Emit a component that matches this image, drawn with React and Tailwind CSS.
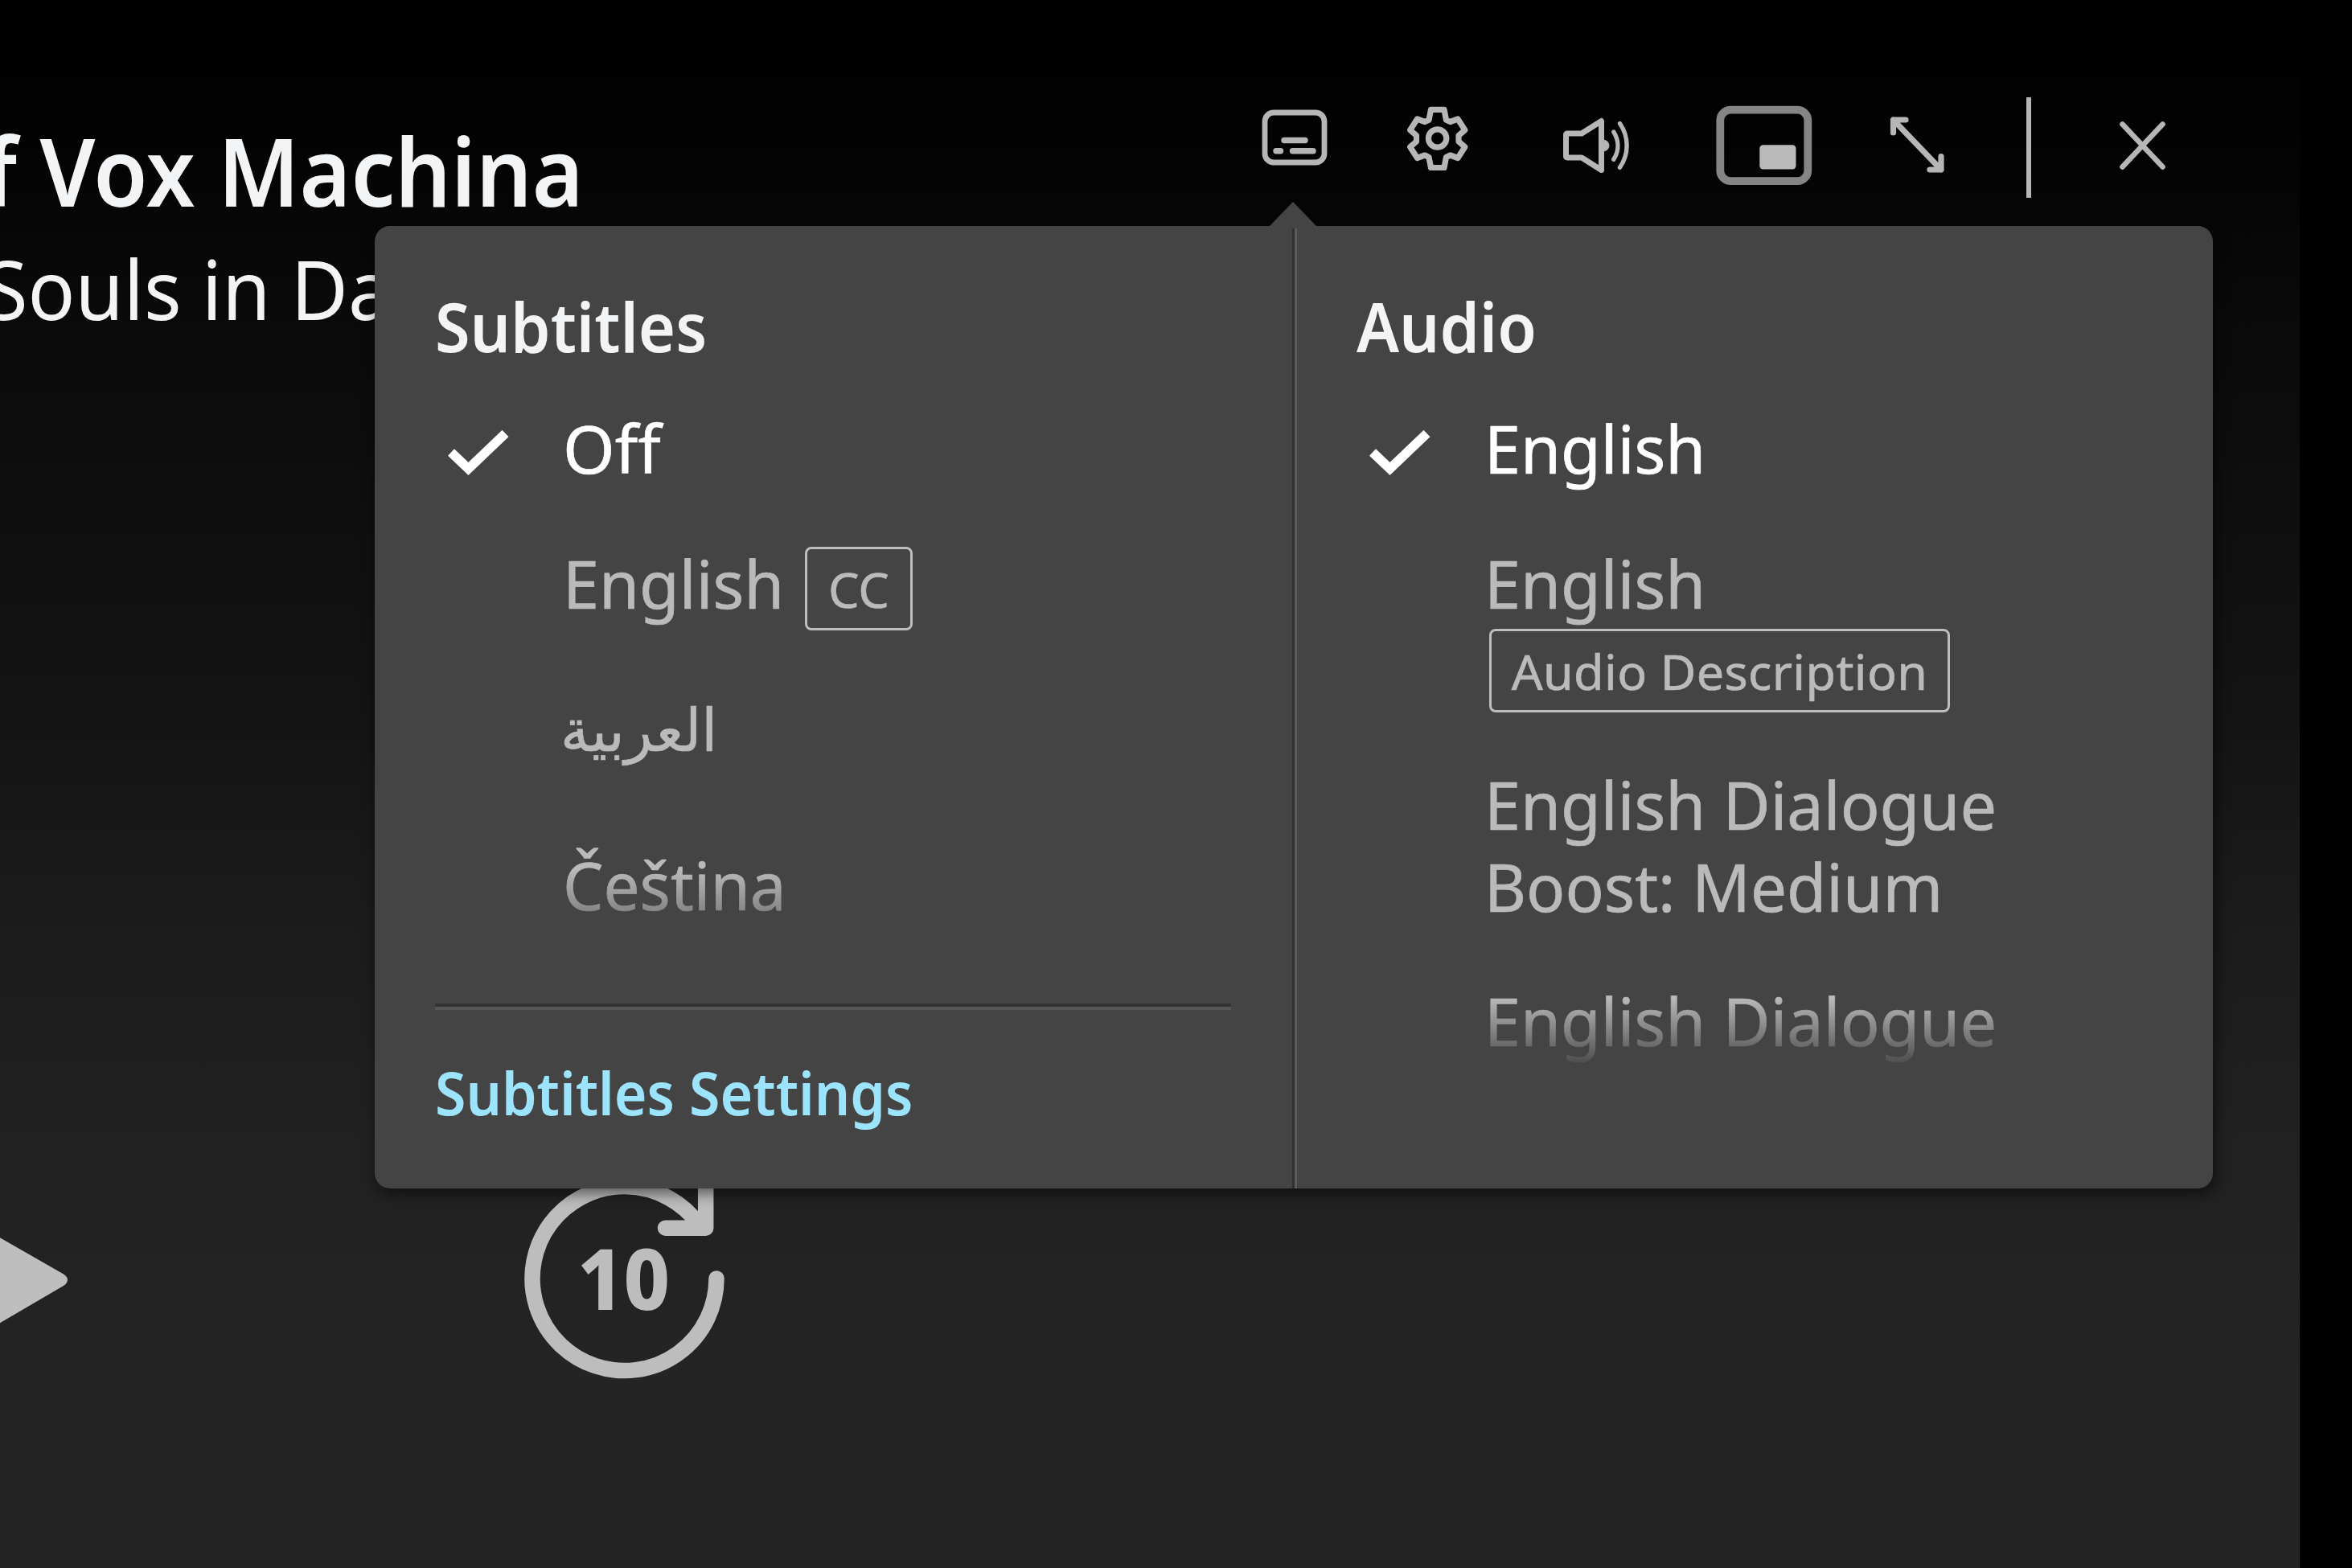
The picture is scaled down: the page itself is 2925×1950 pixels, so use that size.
import React from 'react';

const ICON = '#b6b6b6';

function SubtitlesIcon() {
  return (
    <svg className="h-[125px] w-[82px] shrink-0" viewBox="1569 121 82 125" fill="none" stroke={ICON} strokeLinecap="round">
      <rect x="1573" y="140" width="74" height="62" rx="11" strokeWidth="6.8" />
      <path d="M1597 174.5h26M1587 187.800h5.500M1607.500 187.800h25.500" strokeWidth="7.4" />
    </svg>
  );
}

function GearIcon() {
  return (
    <svg className="ml-[98px] h-[125px] w-[78px] shrink-0" viewBox="1749 121 78 125" fill="none" stroke={ICON} strokeWidth="7.2" strokeLinejoin="round">
      <path d="M1779.500 136.300h16.500l2.500 13 5 2.200 9.500-3.500 8.800 13.800-7.800 6.700v7.500l7.800 6.700-8.800 13.800-9.500-3.500-5 2.500-2.500 13h-16.500l-2.500-13-5-2.500-9.500 3.500-8.800-13.800 7.800-6.700v-7.500l-7.800-6.700 8.800-13.800 9.500 3.500 5-2.200z" />
      <circle cx="1787.600" cy="172" r="11.200" />
    </svg>
  );
}

function VolumeIcon() {
  return (
    <svg className="ml-[116px] h-[125px] w-[84px] shrink-0" viewBox="1943 121 84 125" fill="none" stroke={ICON} strokeLinejoin="round" strokeLinecap="round">
      <path d="M1949 166h18l24.500-15.500v61L1967 196h-18a1.500 1.500 0 0 1-1.500-1.500v-27a1.500 1.500 0 0 1 1.500-1.500z" strokeWidth="7" />
      <path d="M1994 174a7 7 0 0 1 0 14z" fill={ICON} stroke={ICON} strokeWidth="1" />
      <path d="M2006.800 164c6.800 11 6.800 23.500 0 34.300M2014.500 153.500c11.500 17 11.500 38 0 54.700" strokeWidth="5.400" />
    </svg>
  );
}

function PictureInPictureIcon() {
  return (
    <svg className="ml-[107px] h-[125px] w-[120px] shrink-0" viewBox="2134 121 120 125" fill="none">
      <rect x="2139.300" y="136.700" width="109" height="88.500" rx="13" stroke="#858585" strokeWidth="9.800" />
      <rect x="2188.300" y="180.300" width="45.200" height="30.300" rx="4.500" fill="#bababa" />
    </svg>
  );
}

function ExpandIcon() {
  return (
    <svg className="ml-[96px] h-[125px] w-[69px] shrink-0" viewBox="2350 121 69 125" fill="none" stroke={ICON} strokeWidth="7.200" strokeLinecap="round" strokeLinejoin="round">
      <path d="M2354.500 149l59.500 62M2370 149h-15.500v16M2414 194.500V211h-14" />
    </svg>
  );
}

function CloseIcon() {
  return (
    <svg className="ml-[110px] h-[125px] w-[58px] shrink-0" viewBox="2636 121 58 125" fill="none" stroke={ICON} strokeWidth="6.600" strokeLinecap="round">
      <path d="M2639.500 154.500l50 53M2689.500 154.500l-50 53" />
    </svg>
  );
}

function CheckIcon() {
  return (
    <svg className="ml-4 mt-[29px] h-[57px] w-[76px]" viewBox="0 0 76 57" fill="none" stroke="#fff" strokeWidth="11.500">
      <path d="M4 27.500l21.500 20.500L71.500 4" />
    </svg>
  );
}

function Badge({ className, children }) {
  return (
    <span className={`flex h-[104px] items-center justify-center rounded-[8px] border-[3.500px] border-[#bdbdbd] text-[61px] leading-none ${className}`}>
      {children}
    </span>
  );
}

function Label({ children, scale = 'scale-x-[0.987]' }) {
  return <span className={`block origin-left whitespace-nowrap ${scale}`}>{children}</span>;
}

function Option({ selected, className = '', children }) {
  return (
    <li className={`flex items-start font-normal leading-[102px] [-webkit-text-stroke:0.7px] ${selected ? 'text-white' : 'text-[#bababa]'} ${className}`}>
      <div className="w-[159px] shrink-0">{selected && <CheckIcon />}</div>
      {children}
    </li>
  );
}

function SubtitlesColumn() {
  return (
    <section className="w-[1141px] pl-[75px] pt-[75px]">
      <h2 className="origin-left scale-x-[0.943] text-[84px] font-semibold leading-[100px] text-[#f3f4f6]">Subtitles</h2>
      <ul className="mt-[50px] h-[700px] w-[990px] overflow-hidden text-[82px] [mask-image:linear-gradient(to_bottom,#000_575px,transparent_695px)]">
        <Option selected><Label scale="scale-x-[1.01]">Off</Label></Option>
        <Option className="mt-[66px]">
          <Label>English</Label>
          <Badge className="ml-[22px] mt-[6px] w-[134px]">CC</Badge>
        </Option>
        <Option className="mt-[67px]"><span className="block h-[102px] origin-left -translate-x-[3px] translate-y-[4px] scale-x-[0.965] text-[74px]" lang="ar">العربية</span></Option>
        <Option className="mt-[96px]"><Label scale="scale-x-[0.975]">Čeština</Label></Option>
      </ul>
      <div className="mt-[42px] h-[8px] w-[990px] border-b-4 border-t-4 border-b-[#565656] border-t-[#323232]" />
      <a className="mt-[58px] block origin-left scale-x-[0.943] text-[74px] font-semibold leading-[90px] text-[#9ce3fc]">Subtitles Settings</a>
    </section>
  );
}

function AudioColumn() {
  return (
    <section className="flex-1 pl-[74px] pt-[75px]">
      <h2 className="origin-left scale-x-[0.94] text-[84px] font-semibold leading-[100px] text-[#f3f4f6]">Audio</h2>
      <ul className="mt-[50px] h-[830px] w-[990px] overflow-hidden text-[82px] [mask-image:linear-gradient(to_bottom,#000_734px,transparent_824px)]">
        <Option selected><Label>English</Label></Option>
        <Option className="mt-[66px]">
          <div>
            <Label>English</Label>
            <Badge className="ml-[6px] mt-[6px] w-[573px] tracking-[0.400px]">Audio Description</Badge>
          </div>
        </Option>
        <Option className="mt-[63px]">
          <div>
            <Label>English Dialogue</Label>
            <Label scale="scale-x-[0.976]">Boost: Medium</Label>
          </div>
        </Option>
        <Option className="mt-[65px]"><Label>English Dialogue</Label></Option>
      </ul>
    </section>
  );
}

function TrackMenu() {
  return (
    <div className="absolute left-[466px] top-[281px] h-[1197px] w-[2286px]">
      <svg className="absolute -top-[30px] left-[1111px] h-[32px] w-[62px]" viewBox="0 0 62 32">
        <path d="M31 0L60 30v2H2v-2z" fill="#444" />
      </svg>
      <div className="flex h-full rounded-[19px] bg-[#444] shadow-[3px_6px_18px_rgba(0,0,0,0.55)]">
        <SubtitlesColumn />
        <div className="mt-[3px] w-[6px] border-l-3 border-r-3 border-l-[#303030] border-r-[#5a5a5a]" />
        <AudioColumn />
      </div>
    </div>
  );
}

export default function App() {
  return (
    <div className="relative h-[1950px] w-[2925px] overflow-hidden bg-black font-['Noto_Sans','DejaVu_Sans',sans-serif]">
      <div className="h-full w-[2860px] bg-[linear-gradient(to_bottom,#000_0px,#020202_150px,#0a0a0a_400px,#141414_900px,#1b1b1b_1130px,#212121_1420px,#242424_1700px)]">
        <header className="flex h-[1450px] items-start">
          <div className="w-[1569px] pt-[152px] text-[#f3f4f6]">
            <h1 className="-ml-[87px] origin-left scale-x-[0.934] whitespace-nowrap text-[117px] font-semibold leading-[120px]">of Vox Machina</h1>
            <p className="-ml-[19px] mt-[27px] origin-left scale-x-[0.956] whitespace-nowrap text-[102px] font-normal leading-[120px]">Souls in Da</p>
          </div>
          <nav className="mt-[121px] flex">
            <SubtitlesIcon />
            <GearIcon />
            <VolumeIcon />
            <PictureInPictureIcon />
            <ExpandIcon />
            <div className="ml-[101px] h-[125px] w-[6px] bg-[#b6b6b6]" />
            <CloseIcon />
          </nav>
        </header>
        <div className="flex items-start">
          <svg className="h-[280px] w-[90px]" viewBox="0 1450 90 280">
            <path d="M-10 1533.500L79 1584.500q10 7 0 14.500L-10 1651z" fill="#bebebe" />
          </svg>
          <svg className="ml-[550px] h-[280px] w-[280px] overflow-visible" viewBox="640 1450 280 280" fill="none" stroke="#bdbdbd" strokeWidth="19.500" strokeLinecap="round" strokeLinejoin="round">
            <path d="M891 1590a114.500 114.500 0 1 1-21-66" />
            <path d="M827.500 1527.200h50.200V1460" />
            <text transform="translate(775.500 1628.700) scale(0.94 1)" textAnchor="middle" fill="#bdbdbd" stroke="none" className="text-[106px] font-extrabold">10</text>
          </svg>
        </div>
      </div>
      <TrackMenu />
    </div>
  );
}
